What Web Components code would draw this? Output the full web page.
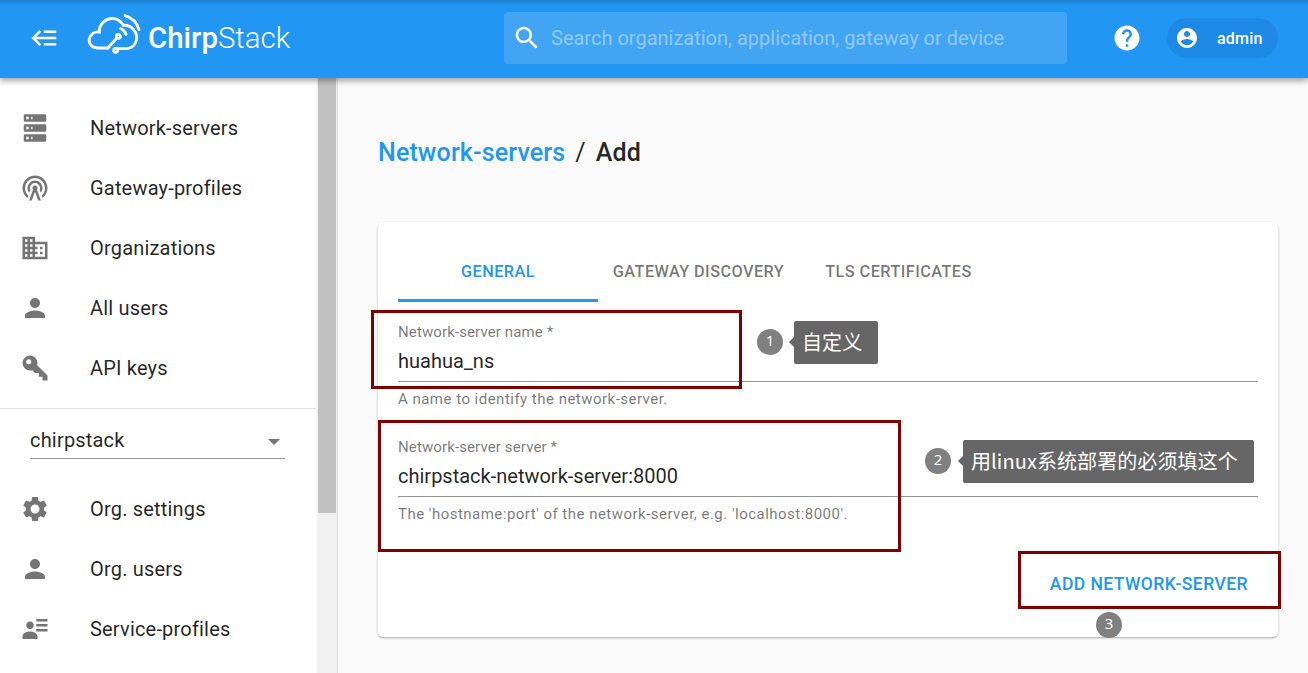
<!DOCTYPE html>
<html lang="en">
<head>
<meta charset="utf-8">
<title>ChirpStack</title>
<style>
  html, body { margin: 0; height: 100%; overflow: hidden; }
  body { font-family: Roboto, "Liberation Sans", sans-serif; background: #fafafa; color: rgba(0, 0, 0, 0.87); }
  .page { display: flex; flex-direction: column; height: 100vh; }
  .body { display: flex; flex: 1; min-height: 0; }
</style>
</head>
<body>
<div class="page">
  <app-header></app-header>
  <div class="body">
    <side-nav></side-nav>
    <add-server-page></add-server-page>
  </div>
</div>

<!-- screenshot annotations drawn over the page -->
<mark-box style="left:371px;top:310px;width:371px;height:79px"></mark-box>
<mark-box style="left:378px;top:420px;width:523px;height:132px"></mark-box>
<mark-box style="left:1018px;top:551px;width:263px;height:58px"></mark-box>
<step-badge style="left:757px;top:329px">1</step-badge>
<step-badge style="left:925px;top:448px">2</step-badge>
<step-badge style="left:1096px;top:612px">3</step-badge>
<note-tip style="left:794px;top:321px">自定义</note-tip>
<note-tip style="left:963px;top:440px">用linux系统部署的必须填这个</note-tip>

<script>
// material + mdi icon paths
const ICONS = {
  server: 'M4,1H20A1,1 0 0,1 21,2V6A1,1 0 0,1 20,7H4A1,1 0 0,1 3,6V2A1,1 0 0,1 4,1M4,9H20A1,1 0 0,1 21,10V14A1,1 0 0,1 20,15H4A1,1 0 0,1 3,14V10A1,1 0 0,1 4,9M4,17H20A1,1 0 0,1 21,18V22A1,1 0 0,1 20,23H4A1,1 0 0,1 3,22V18A1,1 0 0,1 4,17M9,5H10V3H9V5M9,13H10V11H9V13M9,21H10V19H9V21M5,3V5H7V3H5M5,11V13H7V11H5M5,19V21H7V19H5Z',
  tower: 'M12,10A2,2 0 0,1 14,12C14,12.5 13.82,12.94 13.53,13.29L16.7,22H14.57L12,14.93L9.43,22H7.3L10.47,13.29C10.18,12.94 10,12.5 10,12A2,2 0 0,1 12,10M12,8A4,4 0 0,0 8,12C8,12.5 8.1,13 8.28,13.46L7.4,15.86C6.53,14.81 6,13.47 6,12A6,6 0 0,1 12,6A6,6 0 0,1 18,12C18,13.47 17.47,14.81 16.6,15.86L15.72,13.46C15.9,13 16,12.5 16,12A4,4 0 0,0 12,8M12,4A8,8 0 0,0 4,12C4,14.36 5,16.5 6.64,17.94L5.92,19.94C3.54,18.11 2,15.23 2,12A10,10 0 0,1 12,2A10,10 0 0,1 22,12C22,15.23 20.46,18.11 18.08,19.94L17.36,17.94C19,16.5 20,14.36 20,12A8,8 0 0,0 12,4Z',
  domain: 'M12 7V3H2v18h20V7H12zM6 19H4v-2h2v2zm0-4H4v-2h2v2zm0-4H4V9h2v2zm0-4H4V5h2v2zm4 12H8v-2h2v2zm0-4H8v-2h2v2zm0-4H8V9h2v2zm0-4H8V5h2v2zm10 12h-8v-2h2v-2h-2v-2h2v-2h-2V9h8v10zm-2-8h-2v2h2v-2zm0 4h-2v2h2v-2z',
  person: 'M12 12c2.21 0 4-1.79 4-4s-1.79-4-4-4-4 1.79-4 4 1.79 4 4 4zm0 2c-2.67 0-8 1.34-8 4v2h16v-2c0-2.66-5.33-4-8-4z',
  key: 'M22,18V22H18V19H15V16H12L9.74,13.74C9.19,13.91 8.61,14 8,14A6,6 0 0,1 2,8A6,6 0 0,1 8,2A6,6 0 0,1 14,8C14,8.61 13.91,9.19 13.74,9.74L22,18M7,5A2,2 0 0,0 5,7A2,2 0 0,0 7,9A2,2 0 0,0 9,7A2,2 0 0,0 7,5Z',
  settings: 'M19.14 12.94c.04-.3.06-.61.06-.94 0-.32-.02-.64-.07-.94l2.03-1.58c.18-.14.23-.41.12-.61l-1.92-3.32c-.12-.22-.37-.29-.59-.22l-2.39.96c-.5-.38-1.03-.7-1.62-.94l-.36-2.54c-.04-.24-.24-.41-.48-.41h-3.84c-.24 0-.43.17-.47.41l-.36 2.54c-.59.24-1.13.57-1.62.94l-2.39-.96c-.22-.08-.47 0-.59.22L2.74 8.87c-.12.21-.08.47.12.61l2.03 1.58c-.05.3-.09.63-.09.94s.02.64.07.94l-2.03 1.58c-.18.14-.23.41-.12.61l1.92 3.32c.12.22.37.29.59.22l2.39-.96c.5.38 1.03.7 1.62.94l.36 2.54c.05.24.24.41.48.41h3.84c.24 0 .44-.17.47-.41l.36-2.54c.59-.24 1.13-.56 1.62-.94l2.39.96c.22.08.47 0 .59-.22l1.92-3.32c.12-.22.07-.47-.12-.61l-2.01-1.58zM12 15.6c-1.98 0-3.6-1.62-3.6-3.6s1.62-3.6 3.6-3.6 3.6 1.62 3.6 3.6-1.62 3.6-3.6 3.6z',
  details: 'M11,9C11,10.66 9.66,12 8,12C6.34,12 5,10.66 5,9C5,7.34 6.34,6 8,6C9.66,6 11,7.34 11,9M14,20H2V18C2,15.79 4.69,14 8,14C11.31,14 14,15.79 14,18M22,12V14H13V12M22,8V10H13V8M22,4V6H13V4Z',
  backburger: 'M5,13L9,17L7.6,18.42L1.18,12L7.6,5.58L9,7L5,11H21V13H5M21,6V8H11V6H21M21,16V18H11V16H21Z',
  search: 'M15.5 14h-.79l-.28-.27C15.41 12.59 16 11.11 16 9.5 16 5.91 13.09 3 9.5 3S3 5.91 3 9.5 5.91 16 9.5 16c1.61 0 3.09-.59 4.23-1.57l.27.28v.79l5 4.99L20.49 19l-4.99-5zm-6 0C7.01 14 5 11.99 5 9.5S7.01 5 9.5 5 14 7.01 14 9.5 11.99 14 9.5 14z',
  help: 'M12 2C6.48 2 2 6.48 2 12s4.48 10 10 10 10-4.48 10-10S17.52 2 12 2zm1 17h-2v-2h2v2zm2.07-7.75l-.9.92C13.45 12.9 13 13.5 13 15h-2v-.5c0-1.1.45-2.1 1.17-2.83l1.24-1.26c.37-.36.59-.86.59-1.41 0-1.1-.9-2-2-2s-2 .9-2 2H8c0-2.21 1.79-4 4-4s4 1.79 4 4c0 .88-.36 1.68-.93 2.25z',
  account: 'M12 2C6.48 2 2 6.48 2 12s4.48 10 10 10 10-4.48 10-10S17.52 2 12 2zm0 3c1.66 0 3 1.34 3 3s-1.34 3-3 3-3-1.34-3-3 1.34-3 3-3zm0 14.2c-2.5 0-4.71-1.28-6-3.22.03-1.99 4-3.08 6-3.08 1.99 0 5.97 1.09 6 3.08-1.29 1.94-3.5 3.22-6 3.22z'
};

const icon = (name, size) =>
  `<svg width="${size}" height="${size}" viewBox="0 0 24 24" fill="currentColor"><path d="${ICONS[name]}"/></svg>`;

class AppHeader extends HTMLElement {
  constructor() {
    super();
    this.attachShadow({ mode: 'open' });
    this.shadowRoot.innerHTML = `
      <style>
        :host {
          display: flex;
          align-items: center;
          flex: none;
          height: 78px;
          box-sizing: border-box;
          padding: 0 30px 2px 0;
          background: linear-gradient(#1c7cc9, #2196f3 5px);
          box-shadow: 0 3px 6px rgba(0, 0, 0, 0.35);
          color: #fff;
          position: relative;
          z-index: 2;
        }
        .toggle { display: flex; width: 88px; padding-left: 30px; box-sizing: border-box; }
        .brand { display: flex; align-items: center; width: 416px; height: 52px; }
        .brand svg { flex: none; margin: 0 0 8px -8px; }
        .word { font-size: 29.4px; font-weight: 300; margin-left: -2px; }
        .word b { font-weight: 500; }
        .search {
          display: flex;
          align-items: center;
          gap: 9px;
          width: 563px;
          height: 52px;
          padding-left: 8px;
          box-sizing: border-box;
          border-radius: 4px;
          background: rgba(255, 255, 255, 0.15);
        }
        .search span { padding-bottom: 1px; font-size: 20px; color: rgba(255, 255, 255, 0.42); white-space: nowrap; }
        .search svg { flex: none; }
        .right { display: flex; align-items: center; margin-left: auto; gap: 25px; }
        .chip {
          display: flex;
          align-items: center;
          width: 111px;
          height: 40px;
          padding-left: 8px;
          box-sizing: border-box;
          border-radius: 20px;
          background: #1e88e5;
          font-size: 16px;
          font-weight: 500;
          letter-spacing: 0.2px;
        }
        .chip span { margin-left: 18px; }
        svg { display: block; }
      </style>
      <div class="toggle">${icon('backburger', 30)}</div>
      <div class="brand">
        <svg width="70" height="52" viewBox="0 0 210 156" fill="none" stroke="#fff" stroke-width="8.5" stroke-linecap="round">
          <path d="M84 120H52C34 120 25 105 28 92C31 78 44 70 58 72C56 48 80 28 102 32C116 34 124 42 130 52C152 50 172 70 170 92C168 110 156 121 140 122H114"/>
          <circle cx="107" cy="127" r="6"/>
          <circle cx="115" cy="85" r="6"/>
          <path d="M110 91L92 110C88 115 86 118 84 120"/>
          <path d="M122 62C130 65 135 71 138 79"/>
          <path d="M135 23C156 29 171 44 177 65"/>
        </svg>
        <span class="word"><b>Chirp</b>Stack</span>
      </div>
      <div class="search">${icon('search', 30)}<span>Search organization, application, gateway or device</span></div>
      <div class="right">
        ${icon('help', 30)}
        <div class="chip">${icon('account', 24)}<span>admin</span></div>
      </div>
    `;
  }
}

class NavItem extends HTMLElement {
  constructor() {
    super();
    this.attachShadow({ mode: 'open' });
  }

  connectedCallback() {
    this.shadowRoot.innerHTML = `
      <style>
        :host {
          display: flex;
          align-items: center;
          gap: 40px;
          height: 60px;
          padding-left: 20px;
          font-size: 20px;
          letter-spacing: 0.19px;
        }
        svg { display: block; color: #757575; flex: none; }
      </style>
      ${icon(this.getAttribute('icon'), 30)}
      <slot></slot>
    `;
  }
}

class SideNav extends HTMLElement {
  constructor() {
    super();
    this.attachShadow({ mode: 'open' });
    this.shadowRoot.innerHTML = `
      <style>
        :host { display: flex; flex: none; width: 338px; box-sizing: border-box; border-right: 1px solid #e0e0e0; }
        .panel { width: 316px; flex: none; padding-top: 20px; background: #fff; overflow: hidden; }
        hr { margin: 10px 0 0; border: 0; border-top: 1px solid #e0e0e0; }
        .select {
          display: flex;
          align-items: center;
          justify-content: space-between;
          width: 255px;
          height: 30px;
          margin: 20px 0 20px 30px;
          padding-bottom: 7px;
          box-sizing: border-box;
          border-bottom: 1px solid #949494;
          font-size: 20px;
          letter-spacing: 0.19px;
        }
        .caret { width: 0; height: 0; margin: 4px 5px 0 0; border: 6px solid transparent; border-top: 6px solid #757575; border-bottom: 0; }
        .track { flex: 1; margin-left: 1px; padding: 0 1px; background: #f1f1f1; }
        .thumb { height: 435px; background: #c1c1c1; }
      </style>
      <div class="panel">
        <nav-item icon="server">Network-servers</nav-item>
        <nav-item icon="tower">Gateway-profiles</nav-item>
        <nav-item icon="domain">Organizations</nav-item>
        <nav-item icon="person">All users</nav-item>
        <nav-item icon="key">API keys</nav-item>
        <hr>
        <div class="select"><span>chirpstack</span><i class="caret"></i></div>
        <nav-item icon="settings">Org. settings</nav-item>
        <nav-item icon="person">Org. users</nav-item>
        <nav-item icon="details">Service-profiles</nav-item>
      </div>
      <div class="track"><div class="thumb"></div></div>
    `;
  }
}

class TextField extends HTMLElement {
  constructor() {
    super();
    this.attachShadow({ mode: 'open' });
  }

  connectedCallback() {
    this.shadowRoot.innerHTML = `
      <style>
        :host { display: block; color: rgba(0, 0, 0, 0.54); }
        .label { padding-top: 1px; font-size: 15px; line-height: 15px; letter-spacing: 0.12px; }
        .value {
          margin-top: 10px;
          padding-bottom: 8px;
          font-size: 20px;
          line-height: 23px;
          color: rgba(0, 0, 0, 0.87);
          border-bottom: 1px solid #949494;
        }
        .hint { margin-top: 9px; font-size: 15px; line-height: 16px; letter-spacing: 0.48px; }
      </style>
      <div class="label">${this.getAttribute('label')}</div>
      <div class="value">${this.getAttribute('value')}</div>
      <div class="hint"><slot></slot></div>
    `;
  }
}

class AddServerPage extends HTMLElement {
  constructor() {
    super();
    this.attachShadow({ mode: 'open' });
    this.shadowRoot.innerHTML = `
      <style>
        :host { display: block; flex: 1; padding: 60px 30px 0 40px; min-width: 0; }
        h1 { margin: 0 0 54px; font-size: 25px; line-height: 30px; font-weight: 500; letter-spacing: 0.14px; color: rgba(0, 0, 0, 0.87); }
        h1 a { color: #2196f3; }
        h1 i { font-style: normal; font-weight: 400; margin: 0 10px; }
        .card {
          padding: 20px 20px 30px;
          background: #fff;
          border-radius: 5px;
          box-shadow: 0 1px 3px rgba(0, 0, 0, 0.2), 0 1px 1px rgba(0, 0, 0, 0.14);
        }
        .tabs { display: flex; height: 60px; margin-bottom: 22px; }
        .tab {
          display: flex;
          align-items: center;
          justify-content: center;
          width: 200px;
          box-sizing: border-box;
          padding: 0 0 1px 1px;
          font-size: 16.25px;
          font-weight: 500;
          letter-spacing: 0.44px;
          color: rgba(0, 0, 0, 0.54);
        }
        .tab.on { color: #2196f3; border-bottom: 3px solid #2196f3; padding: 2px 0 0; }
        text-field + text-field { margin-top: 32px; }
        .actions { display: flex; justify-content: flex-end; margin-top: 40px; }
        .add {
          padding: 0 10px;
          height: 45px;
          line-height: 45px;
          font-size: 17.5px;
          font-weight: 500;
          letter-spacing: 0.44px;
          color: #2196f3;
        }
      </style>
      <h1><a>Network-servers</a><i>/</i>Add</h1>
      <div class="card">
        <div class="tabs">
          <div class="tab on">GENERAL</div>
          <div class="tab">GATEWAY DISCOVERY</div>
          <div class="tab">TLS CERTIFICATES</div>
        </div>
        <text-field label="Network-server name *" value="huahua_ns">A name to identify the network-server.</text-field>
        <text-field label="Network-server server *" value="chirpstack-network-server:8000">The 'hostname:port' of the network-server, e.g. 'localhost:8000'.</text-field>
        <div class="actions"><div class="add">ADD NETWORK-SERVER</div></div>
      </div>
    `;
  }
}

class MarkBox extends HTMLElement {
  constructor() {
    super();
    this.attachShadow({ mode: 'open' });
    this.shadowRoot.innerHTML = `
      <style>
        :host { display: block; position: absolute; box-sizing: border-box; border: 3px solid #800000; z-index: 3; }
      </style>
    `;
  }
}

class StepBadge extends HTMLElement {
  constructor() {
    super();
    this.attachShadow({ mode: 'open' });
    this.shadowRoot.innerHTML = `
      <style>
        :host {
          display: flex;
          align-items: center;
          justify-content: center;
          position: absolute;
          z-index: 3;
          width: 26px;
          height: 26px;
          padding-bottom: 4px;
          box-sizing: border-box;
          border-radius: 50%;
          background: #808080;
          color: #fff;
          font: 15px "Open Sans", "Liberation Sans", sans-serif;
        }
      </style>
      <slot></slot>
    `;
  }
}

class NoteTip extends HTMLElement {
  constructor() {
    super();
    this.attachShadow({ mode: 'open' });
    this.shadowRoot.innerHTML = `
      <style>
        :host {
          display: block;
          position: absolute;
          z-index: 3;
          height: 43px;
          padding: 0 16px 0 8px;
          border-radius: 2px;
          background: #666;
          color: #fff;
          font: 400 20px/41px "Noto Sans CJK SC", "Open Sans", sans-serif;
          letter-spacing: 0.08px;
          white-space: nowrap;
        }
        :host::before {
          content: "";
          position: absolute;
          left: -5px;
          top: 16px;
          border: 5px solid transparent;
          border-right-color: #666;
          border-left: 0;
        }
      </style>
      <slot></slot>
    `;
  }
}

customElements.define('app-header', AppHeader);
customElements.define('nav-item', NavItem);
customElements.define('side-nav', SideNav);
customElements.define('text-field', TextField);
customElements.define('add-server-page', AddServerPage);
customElements.define('mark-box', MarkBox);
customElements.define('step-badge', StepBadge);
customElements.define('note-tip', NoteTip);
</script>
</body>
</html>
